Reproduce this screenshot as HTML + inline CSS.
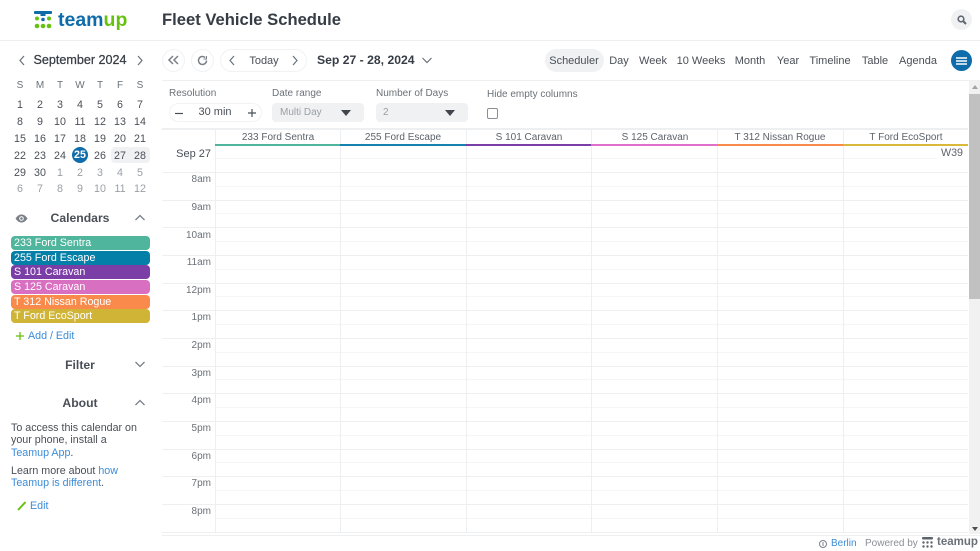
<!DOCTYPE html>
<html><head><meta charset="utf-8">
<style>
html,body{margin:0;padding:0;width:980px;height:551px;overflow:hidden;background:#fff}
body{font-family:"Liberation Sans",sans-serif;color:#4a4f57;position:relative;font-size:11px;filter:blur(.35px)}
.t{position:absolute;white-space:nowrap;line-height:14px;margin-top:1px}
.z{margin-top:0}
.c{transform:translateX(-50%)}
.r{transform:translateX(-100%)}
.l{position:absolute;background:#eeeff0}
.h{position:absolute;background:#f5f6f6;left:215px;width:753px;height:1px}
.cal{position:absolute;left:11px;width:139px;height:14px;border-radius:4px;color:#fff;font-size:10.7px;line-height:14px;padding-left:3px;box-sizing:border-box}
.pill{position:absolute;border:1px solid #f1f2f3;box-sizing:border-box;border-radius:12px;background:#fff}
.sel{position:absolute;background:#eff1f3;border-radius:4px;height:19px;top:103px}
svg{position:absolute;overflow:visible}
a{color:#3c8cd8;text-decoration:none}
</style></head><body>

<!-- logo -->
<svg style="left:34px;top:11px" width="19" height="18" viewBox="0 0 19 18">
<rect x="0" y="0" width="18" height="3" rx="1" fill="#0f6cab"/>
<rect x="6.500" y="3" width="5" height="2" fill="#0f6cab"/>
<g fill="#66c111"><circle cx="3" cy="7.500" r="2"/><circle cx="15" cy="7.500" r="2"/><circle cx="3" cy="15" r="2.300"/><circle cx="9" cy="15" r="2.300"/><circle cx="15" cy="15" r="2.300"/></g>
<g fill="#0f6cab"><circle cx="9" cy="8.500" r="1.800"/></g>
</svg>
<div class="t z" style="left:58px;top:9px;font-size:19.5px;line-height:22px;font-weight:bold;color:#0f6cab">team<span style="color:#66c111">up</span></div>

<div class="t z" style="left:162px;top:9px;font-size:16.6px;line-height:21px;font-weight:bold;color:#373d45">Fleet Vehicle Schedule</div>

<!-- search -->
<div style="position:absolute;left:951px;top:9px;width:21px;height:21px;border-radius:50%;background:#eff1f3"></div>
<svg style="left:957px;top:15px" width="10" height="10" viewBox="0 0 10 10" fill="none" stroke="#5f6670" stroke-width="1.6"><circle cx="4" cy="4" r="2.8"/><path d="M6 6l3 3" stroke-width="2"/></svg>

<div class="l" style="left:0;top:40px;width:980px;height:1px"></div>

<!-- mini calendar -->
<svg style="left:18px;top:55px" width="8" height="11" fill="none" stroke="#6b7178" stroke-width="1.2"><path d="M6 1L2 5.5 6 10"/></svg>
<svg style="left:136px;top:55px" width="8" height="11" fill="none" stroke="#6b7178" stroke-width="1.2"><path d="M2 1L6 5.5 2 10"/></svg>
<div class="t c" style="left:80px;top:52px;font-size:12.6px;line-height:15px;color:#373d45;font-weight:500;-webkit-text-stroke:.25px #373d45">September 2024</div>

<div style="position:absolute;left:111px;top:147px;width:39px;height:16px;background:#eff1f3;border-radius:4px"></div>
<div style="position:absolute;left:72px;top:147px;width:16px;height:16px;background:#0f6cab;border-radius:50%"></div>

<div id="m">
<div class="t c" style="left:20px;top:78px;font-size:10px;color:#6b7178">S</div><div class="t c" style="left:40px;top:78px;font-size:10px;color:#6b7178">M</div><div class="t c" style="left:60px;top:78px;font-size:10px;color:#6b7178">T</div><div class="t c" style="left:80px;top:78px;font-size:10px;color:#6b7178">W</div><div class="t c" style="left:100px;top:78px;font-size:10px;color:#6b7178">T</div><div class="t c" style="left:120px;top:78px;font-size:10px;color:#6b7178">F</div><div class="t c" style="left:140px;top:78px;font-size:10px;color:#6b7178">S</div>

<div class="t c" style="left:20px;top:97px;font-size:10.7px">1</div><div class="t c" style="left:40px;top:97px;font-size:10.7px">2</div><div class="t c" style="left:60px;top:97px;font-size:10.7px">3</div><div class="t c" style="left:80px;top:97px;font-size:10.7px">4</div><div class="t c" style="left:100px;top:97px;font-size:10.7px">5</div><div class="t c" style="left:120px;top:97px;font-size:10.7px">6</div><div class="t c" style="left:140px;top:97px;font-size:10.7px">7</div>

<div class="t c" style="left:20px;top:114px;font-size:10.7px">8</div><div class="t c" style="left:40px;top:114px;font-size:10.7px">9</div><div class="t c" style="left:60px;top:114px;font-size:10.7px">10</div><div class="t c" style="left:80px;top:114px;font-size:10.7px">11</div><div class="t c" style="left:100px;top:114px;font-size:10.7px">12</div><div class="t c" style="left:120px;top:114px;font-size:10.7px">13</div><div class="t c" style="left:140px;top:114px;font-size:10.7px">14</div>

<div class="t c" style="left:20px;top:131px;font-size:10.7px">15</div><div class="t c" style="left:40px;top:131px;font-size:10.7px">16</div><div class="t c" style="left:60px;top:131px;font-size:10.7px">17</div><div class="t c" style="left:80px;top:131px;font-size:10.7px">18</div><div class="t c" style="left:100px;top:131px;font-size:10.7px">19</div><div class="t c" style="left:120px;top:131px;font-size:10.7px">20</div><div class="t c" style="left:140px;top:131px;font-size:10.7px">21</div>

<div class="t c" style="left:20px;top:148px;font-size:10.7px">22</div><div class="t c" style="left:40px;top:148px;font-size:10.7px">23</div><div class="t c" style="left:60px;top:148px;font-size:10.7px">24</div><div class="t c z" style="left:80px;top:148px;font-size:10.7px;color:#fff;font-weight:bold">25</div><div class="t c" style="left:100px;top:148px;font-size:10.7px">26</div><div class="t c" style="left:120px;top:148px;font-size:10.7px">27</div><div class="t c" style="left:140px;top:148px;font-size:10.7px">28</div>

<div class="t c" style="left:20px;top:165px;font-size:10.7px">29</div><div class="t c" style="left:40px;top:165px;font-size:10.7px">30</div><div class="t c" style="left:60px;top:165px;font-size:10.7px;color:#9a9fa5">1</div><div class="t c" style="left:80px;top:165px;font-size:10.7px;color:#9a9fa5">2</div><div class="t c" style="left:100px;top:165px;font-size:10.7px;color:#9a9fa5">3</div><div class="t c" style="left:120px;top:165px;font-size:10.7px;color:#9a9fa5">4</div><div class="t c" style="left:140px;top:165px;font-size:10.7px;color:#9a9fa5">5</div>

<div class="t c" style="left:20px;top:181px;font-size:10.7px;color:#9a9fa5">6</div><div class="t c" style="left:40px;top:181px;font-size:10.7px;color:#9a9fa5">7</div><div class="t c" style="left:60px;top:181px;font-size:10.7px;color:#9a9fa5">8</div><div class="t c" style="left:80px;top:181px;font-size:10.7px;color:#9a9fa5">9</div><div class="t c" style="left:100px;top:181px;font-size:10.7px;color:#9a9fa5">10</div><div class="t c" style="left:120px;top:181px;font-size:10.7px;color:#9a9fa5">11</div><div class="t c" style="left:140px;top:181px;font-size:10.7px;color:#9a9fa5">12</div>
</div>

<!-- calendars -->
<svg style="left:15px;top:214px" width="13" height="9" viewBox="0 0 13 9"><path d="M.5 4.5C2.5 1.5 4.5.5 6.5.5s4 1 6 4c-2 3-4 4-6 4s-4-1-6-4z" fill="#7a8088"/><circle cx="6.5" cy="4.5" r="2.3" fill="#fff"/><circle cx="6.5" cy="4.5" r="1.3" fill="#7a8088"/></svg>
<div class="t c z" style="left:80px;top:211px;font-size:12.2px;font-weight:bold;color:#4a4f57">Calendars</div>
<svg style="left:135px;top:214px" width="10" height="7" fill="none" stroke="#7a8088" stroke-width="1.3"><path d="M.5 6L5 1.5 9.500 6"/></svg>

<div class="cal" style="top:236px;background:#4fb59c">233 Ford Sentra</div>
<div class="cal" style="top:250.700px;background:#047fa8">255 Ford Escape</div>
<div class="cal" style="top:265.400px;background:#7a3ea6">S 101 Caravan</div>
<div class="cal" style="top:279.700px;background:#d96fc0">S 125 Caravan</div>
<div class="cal" style="top:294.500px;background:#f98a4b">T 312 Nissan Rogue</div>
<div class="cal" style="top:309px;background:#d0b436">T Ford EcoSport</div>

<svg style="left:16px;top:332px" width="8" height="8" stroke="#66c111" stroke-width="1.3"><path d="M4 0v8M0 4h8"/></svg>
<div class="t z" style="left:28px;top:329px;font-size:10.7px"><a>Add / Edit</a></div>

<div class="t c z" style="left:80px;top:358px;font-size:12.2px;font-weight:bold;color:#4a4f57">Filter</div>
<svg style="left:135px;top:361px" width="10" height="7" fill="none" stroke="#7a8088" stroke-width="1.3"><path d="M.5 1L5 5.5 9.500 1"/></svg>

<div class="t c z" style="left:80px;top:396px;font-size:12.2px;font-weight:bold;color:#4a4f57">About</div>
<svg style="left:135px;top:399px" width="10" height="7" fill="none" stroke="#7a8088" stroke-width="1.3"><path d="M.5 6L5 1.5 9.500 6"/></svg>

<div class="t" style="left:11px;top:420px;font-size:10.7px;color:#4a4f57">To access this calendar on</div>
<div class="t" style="left:11px;top:432px;font-size:10.7px;color:#4a4f57">your phone, install a</div>
<div class="t" style="left:11px;top:445px;font-size:10.7px;color:#4a4f57"><a>Teamup App</a>.</div>
<div class="t" style="left:11px;top:463px;font-size:10.7px;color:#4a4f57">Learn more about <a>how</a></div>
<div class="t" style="left:11px;top:475px;font-size:10.7px;color:#4a4f57"><a>Teamup is different</a>.</div>
<svg style="left:17px;top:501px" width="10" height="10" fill="none" stroke="#66c111" stroke-width="2"><path d="M1 9L8.500 1"/></svg>
<div class="t z" style="left:30px;top:499px;font-size:10.7px"><a>Edit</a></div>

<!-- toolbar -->
<div class="pill" style="left:162px;top:49px;width:23px;height:23px"></div>
<svg style="left:168px;top:55px" width="11" height="10" fill="none" stroke="#7a8088" stroke-width="1.500"><path d="M5 1L1 5l4 4M10 1L6 5l4 4"/></svg>
<div class="pill" style="left:191px;top:49px;width:23px;height:23px"></div>
<svg style="left:197px;top:55px" width="11" height="11" viewBox="0 0 11 11" fill="none" stroke="#7a8088" stroke-width="1.500"><path d="M9.500 5.500a4 4 0 1 1-1.300-3"/><path d="M9.500 1v3h-3" stroke-width="1"/></svg>
<div class="pill" style="left:220px;top:49px;width:87px;height:23px"></div>
<svg style="left:228px;top:55px" width="7" height="11" fill="none" stroke="#6b7178" stroke-width="1.2"><path d="M6 1L2 5.500 6 10"/></svg>
<svg style="left:292px;top:55px" width="7" height="11" fill="none" stroke="#6b7178" stroke-width="1.2"><path d="M1 1L5 5.500 1 10"/></svg>
<div class="t c" style="left:264px;top:53px;font-size:11px">Today</div>
<div class="t z" style="left:317px;top:53px;font-size:12.2px;font-weight:bold;color:#373d45">Sep 27 - 28, 2024</div>
<svg style="left:422px;top:57px" width="10" height="7" fill="none" stroke="#6b7178" stroke-width="1.2"><path d="M.5 1L5 5.500 9.500 1"/></svg>

<div style="position:absolute;left:545px;top:49px;width:59px;height:23px;background:#eff1f3;border-radius:12px"></div>
<div class="t c" style="left:574px;top:53px;font-size:11px">Scheduler</div>
<div class="t c" style="left:619px;top:53px;font-size:11px">Day</div>
<div class="t c" style="left:653px;top:53px;font-size:11px">Week</div>
<div class="t c" style="left:701px;top:53px;font-size:11px">10 Weeks</div>
<div class="t c" style="left:750px;top:53px;font-size:11px">Month</div>
<div class="t c" style="left:788px;top:53px;font-size:11px">Year</div>
<div class="t c" style="left:830px;top:53px;font-size:11px">Timeline</div>
<div class="t c" style="left:875px;top:53px;font-size:11px">Table</div>
<div class="t c" style="left:918px;top:53px;font-size:11px">Agenda</div>
<div style="position:absolute;left:951px;top:50px;width:21px;height:21px;border-radius:50%;background:#0f6cab"></div>
<svg style="left:956px;top:57px" width="11" height="8" stroke="#fff" stroke-width="1.400"><path d="M0 1h11M0 4h11M0 7h11"/></svg>

<div class="l" style="left:162px;top:80px;width:818px;height:1px"></div>

<!-- options -->
<div class="t" style="left:169px;top:86px;font-size:10px;color:#6b7178">Resolution</div>
<div class="t" style="left:272px;top:86px;font-size:10px;color:#6b7178">Date range</div>
<div class="t" style="left:376px;top:86px;font-size:10px;color:#6b7178">Number of Days</div>
<div class="t" style="left:487px;top:87px;font-size:10px;color:#6b7178">Hide empty columns</div>
<div class="pill" style="left:169px;top:103px;width:93px;height:19px;border-radius:10px"></div>
<svg style="left:175px;top:113px" width="8" height="2" stroke="#4a4f57" stroke-width="1.200"><path d="M0 .5h8"/></svg>
<svg style="left:248px;top:109px" width="8" height="8" stroke="#4a4f57" stroke-width="1.200"><path d="M4 0v8M0 4h8"/></svg>
<div class="t c" style="left:215px;top:104px;font-size:11px;color:#4a4f57">30 min</div>
<div class="sel" style="left:272px;width:92px"></div>
<div class="t" style="left:280px;top:105px;font-size:10px;color:#9a9fa5">Multi Day</div>
<svg style="left:341px;top:110px" width="10" height="6"><path d="M0 0h10L5 6z" fill="#41464d"/></svg>
<div class="sel" style="left:376px;width:92px"></div>
<div class="t" style="left:383px;top:105px;font-size:10px;color:#9a9fa5">2</div>
<svg style="left:445px;top:110px" width="10" height="6"><path d="M0 0h10L5 6z" fill="#41464d"/></svg>
<div style="position:absolute;left:487px;top:108px;width:9px;height:9px;border:1px solid #8a8f96;border-radius:2px;background:#fff"></div>

<div class="l" style="left:162px;top:128px;width:806px;height:2px"></div>

<!-- columns -->
<div class="t c" style="left:278px;top:130px;font-size:10px;color:#5d636b">233 Ford Sentra</div>
<div class="t c" style="left:403px;top:130px;font-size:10px;color:#5d636b">255 Ford Escape</div>
<div class="t c" style="left:529px;top:130px;font-size:10px;color:#5d636b">S 101 Caravan</div>
<div class="t c" style="left:655px;top:130px;font-size:10px;color:#5d636b">S 125 Caravan</div>
<div class="t c" style="left:780px;top:130px;font-size:10px;color:#5d636b">T 312 Nissan Rogue</div>
<div class="t c" style="left:906px;top:130px;font-size:10px;color:#5d636b">T Ford EcoSport</div>

<!-- grid lines -->
<div class="h" style="top:158px"></div>
<div class="l" style="left:162px;top:172px;width:806px;height:1px"></div>
<div class="h" style="top:186px"></div>
<div class="l" style="left:162px;top:200px;width:806px;height:1px"></div>
<div class="h" style="top:213px"></div>
<div class="l" style="left:162px;top:227px;width:806px;height:1px"></div>
<div class="h" style="top:241px"></div>
<div class="l" style="left:162px;top:255px;width:806px;height:1px"></div>
<div class="h" style="top:269px"></div>
<div class="l" style="left:162px;top:283px;width:806px;height:1px"></div>
<div class="h" style="top:296px"></div>
<div class="l" style="left:162px;top:310px;width:806px;height:1px"></div>
<div class="h" style="top:324px"></div>
<div class="l" style="left:162px;top:338px;width:806px;height:1px"></div>
<div class="h" style="top:352px"></div>
<div class="l" style="left:162px;top:366px;width:806px;height:1px"></div>
<div class="h" style="top:379px"></div>
<div class="l" style="left:162px;top:393px;width:806px;height:1px"></div>
<div class="h" style="top:407px"></div>
<div class="l" style="left:162px;top:421px;width:806px;height:1px"></div>
<div class="h" style="top:435px"></div>
<div class="l" style="left:162px;top:449px;width:806px;height:1px"></div>
<div class="h" style="top:462px"></div>
<div class="l" style="left:162px;top:476px;width:806px;height:1px"></div>
<div class="h" style="top:490px"></div>
<div class="l" style="left:162px;top:504px;width:806px;height:1px"></div>
<div class="h" style="top:518px"></div>
<div class="l" style="left:162px;top:532px;width:806px;height:1px"></div>
<div class="l" style="left:162px;top:535px;width:818px;height:1px"></div>

<div class="l" style="left:215px;top:130px;width:1px;height:403px"></div>
<div class="l" style="left:340px;top:130px;width:1px;height:403px"></div>
<div class="l" style="left:466px;top:130px;width:1px;height:403px"></div>
<div class="l" style="left:591px;top:130px;width:1px;height:403px"></div>
<div class="l" style="left:717px;top:130px;width:1px;height:403px"></div>
<div class="l" style="left:843px;top:130px;width:1px;height:403px"></div>

<div style="position:absolute;top:144px;height:2px;left:215px;width:125px;background:#4fb59c"></div>
<div style="position:absolute;top:144px;height:2px;left:340px;width:126px;background:#1581ad"></div>
<div style="position:absolute;top:144px;height:2px;left:466px;width:125px;background:#7a3ea6"></div>
<div style="position:absolute;top:144px;height:2px;left:591px;width:126px;background:#e06fcb"></div>
<div style="position:absolute;top:144px;height:2px;left:717px;width:126px;background:#f98a4b"></div>
<div style="position:absolute;top:144px;height:2px;left:843px;width:125px;background:#d8b93a"></div>

<div style="position:absolute;left:938px;top:147px;width:30px;height:14px;background:#fff"></div>
<div class="t" style="left:941px;top:145px;font-size:10.7px;color:#5d636b">W39</div>

<div class="t r z" style="left:211px;top:147px;font-size:11px;color:#4a4f57">Sep 27</div>
<div class="t r" style="left:211px;top:172px;font-size:10px;color:#6b7178">8am</div>
<div class="t r" style="left:211px;top:200px;font-size:10px;color:#6b7178">9am</div>
<div class="t r" style="left:211px;top:228px;font-size:10px;color:#6b7178">10am</div>
<div class="t r" style="left:211px;top:255px;font-size:10px;color:#6b7178">11am</div>
<div class="t r" style="left:211px;top:283px;font-size:10px;color:#6b7178">12pm</div>
<div class="t r" style="left:211px;top:310px;font-size:10px;color:#6b7178">1pm</div>
<div class="t r" style="left:211px;top:338px;font-size:10px;color:#6b7178">2pm</div>
<div class="t r" style="left:211px;top:366px;font-size:10px;color:#6b7178">3pm</div>
<div class="t r" style="left:211px;top:393px;font-size:10px;color:#6b7178">4pm</div>
<div class="t r" style="left:211px;top:421px;font-size:10px;color:#6b7178">5pm</div>
<div class="t r" style="left:211px;top:449px;font-size:10px;color:#6b7178">6pm</div>
<div class="t r" style="left:211px;top:476px;font-size:10px;color:#6b7178">7pm</div>
<div class="t r" style="left:211px;top:504px;font-size:10px;color:#6b7178">8pm</div>

<!-- scrollbar -->
<div style="position:absolute;left:969px;top:81px;width:11px;height:453px;background:#f1f1f1"></div>
<div style="position:absolute;left:969px;top:94px;width:11px;height:205px;background:#c1c1c1"></div>
<svg style="left:972px;top:85px" width="6" height="4"><path d="M0 4h6L3 0z" fill="#a3a3a3"/></svg>
<svg style="left:972px;top:527px" width="6" height="4"><path d="M0 0h6L3 4z" fill="#505050"/></svg>

<!-- footer -->
<svg style="left:819px;top:540px" width="8" height="8" fill="none" stroke="#7a8088"><circle cx="4" cy="4" r="3.500"/><path d="M4 2v4"/></svg>
<div class="t z" style="left:831px;top:537px;font-size:10px"><a>Berlin</a></div>
<div class="t z" style="left:865px;top:537px;font-size:10px;color:#8a8f96">Powered by</div>
<svg style="left:922px;top:537px" width="11" height="11" fill="#5d636b"><rect width="11" height="2.500" rx="1"/><circle cx="1.500" cy="5.500" r="1.200"/><circle cx="5.500" cy="5.500" r="1.200"/><circle cx="9.500" cy="5.500" r="1.200"/><circle cx="1.500" cy="9.500" r="1.200"/><circle cx="5.500" cy="9.500" r="1.200"/><circle cx="9.500" cy="9.500" r="1.200"/></svg>
<div class="t z" style="left:937px;top:535px;font-size:11.500px;font-weight:bold;color:#6b7178">teamup</div>

</body></html>
